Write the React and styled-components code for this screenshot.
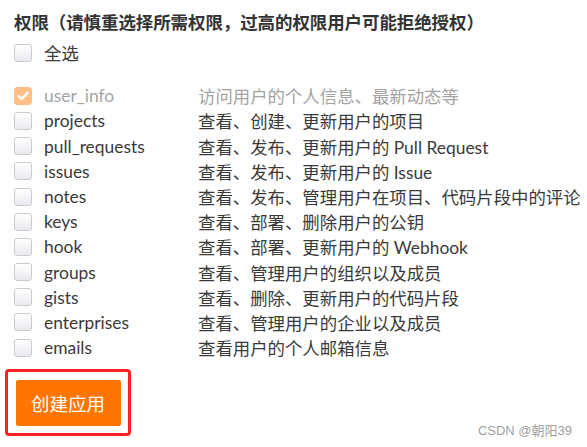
import React from 'react';
import styled, { createGlobalStyle } from 'styled-components';

const GlobalStyle = createGlobalStyle`
  html, body {
    margin: 0;
    background: #ffffff;
  }
  body {
    font-family: Lato, "Noto Sans CJK SC", sans-serif;
    color: #333333;
  }
`;

const Page = styled.div`
  position: relative;
  width: 587px;
  height: 447px;
  padding: 9px 0 0 14px;
  box-sizing: border-box;
  overflow: hidden;
`;

const Title = styled.div`
  font-family: "Noto Sans CJK SC", sans-serif;
  font-size: 17.5px;
  font-weight: 700;
  line-height: 26px;
  color: #333333;
  letter-spacing: -0.1px;
`;

const Row = styled.label`
  display: flex;
  align-items: center;
  height: 25.2px;
  font-size: 17.4px;
  color: ${(p) => (p.$muted ? '#a3a3a3' : '#3a3a3a')};
`;

const SelectAll = styled(Row)`
  margin-top: 5px;
  margin-bottom: 18px;
`;

const Box = styled.span`
  flex: none;
  width: 18px;
  height: 18px;
  border-radius: 3px;
  box-sizing: border-box;
  border: 1px solid ${(p) => (p.$checked ? '#ffbf85' : '#c9cbd0')};
  background: ${(p) => (p.$checked ? '#ffbf85' : 'linear-gradient(#ffffff, #e9eaee)')};
  display: flex;
  align-items: center;
  justify-content: center;
  margin-right: 12px;
`;

const Name = styled.span`
  width: 154px;
  flex: none;
`;

const Desc = styled.span`
  white-space: nowrap;
`;

const Frame = styled.div`
  margin: 9px 0 0 -9px;
  width: 126px;
  height: 67px;
  border: 3px solid #ff2222;
  border-radius: 4px;
  box-sizing: border-box;
  display: flex;
  align-items: center;
  justify-content: center;
`;

const CreateButton = styled.button`
  width: 105px;
  height: 46px;
  border: none;
  border-radius: 2px;
  background: #ff7500;
  color: #ffffff;
  font-family: "Noto Sans CJK SC", sans-serif;
  font-size: 18.5px;
  cursor: pointer;
`;

const Watermark = styled.div`
  position: absolute;
  right: 15px;
  bottom: 8px;
  font-family: "Liberation Sans", "Noto Sans CJK SC", sans-serif;
  font-size: 13px;
  color: #a0a0a0;
`;

const Check = () => (
  <svg width="12" height="10" viewBox="0 0 12 10">
    <path d="M1.5 5 L4.6 8 L10.5 1.8" fill="none" stroke="#ffffff" strokeWidth="2.4" strokeLinecap="round" strokeLinejoin="round" />
  </svg>
);

const scopes = [
  ['user_info', '访问用户的个人信息、最新动态等', true],
  ['projects', '查看、创建、更新用户的项目'],
  ['pull_requests', '查看、发布、更新用户的 Pull Request'],
  ['issues', '查看、发布、更新用户的 Issue'],
  ['notes', '查看、发布、管理用户在项目、代码片段中的评论'],
  ['keys', '查看、部署、删除用户的公钥'],
  ['hook', '查看、部署、更新用户的 Webhook'],
  ['groups', '查看、管理用户的组织以及成员'],
  ['gists', '查看、删除、更新用户的代码片段'],
  ['enterprises', '查看、管理用户的企业以及成员'],
  ['emails', '查看用户的个人邮箱信息'],
];

export default function App() {
  return (
    <>
      <GlobalStyle />
      <Page>
        <Title>权限（请慎重选择所需权限，过高的权限用户可能拒绝授权）</Title>
        <SelectAll>
          <Box />
          全选
        </SelectAll>
        {scopes.map(([name, desc, fixed]) => (
          <Row key={name} $muted={fixed}>
            <Box $checked={fixed}>{fixed && <Check />}</Box>
            <Name>{name}</Name>
            <Desc>{desc}</Desc>
          </Row>
        ))}
        <Frame>
          <CreateButton>创建应用</CreateButton>
        </Frame>
        <Watermark>CSDN @朝阳39</Watermark>
      </Page>
    </>
  );
}
